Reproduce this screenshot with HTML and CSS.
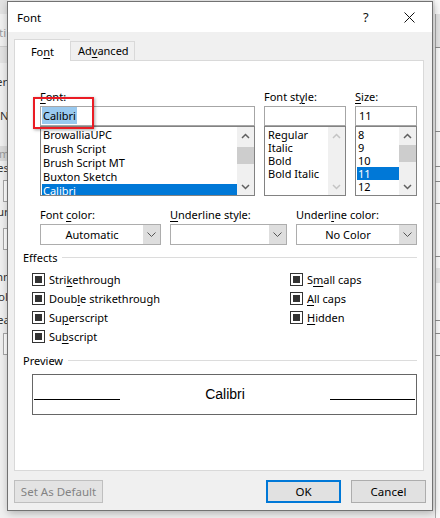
FILE: index.html
```html
<!DOCTYPE html>
<html lang="en">
<head>
    <meta charset="UTF-8">
    <meta name="viewport" content="width=device-width, initial-scale=1.0">
    <title>Font</title>
    <link rel="stylesheet" href="styles.css">
</head>
<body>
    <!-- the Word window behind the dialog -->
    <div class="backdrop">
        <div class="bd-band bd-band-top"></div>
        <div class="bd-band bd-band-tabs"></div>
        <span class="bd-text bd-faint" style="top: 26px; left: -1px;">ti</span>
        <span class="bd-text" style="top: 75px; left: -4px;">er</span>
        <span class="bd-text" style="top: 109px; left: 0px;">N</span>
        <div class="bd-box bd-box-gray" style="top: 146px;"><span class="bd-faint">m</span></div>
        <span class="bd-text" style="top: 161px; left: -3px;">es</span>
        <div class="bd-box" style="top: 180px;"></div>
        <span class="bd-text" style="top: 205px; left: -3px;">ur</span>
        <div class="bd-box" style="top: 228px;"></div>
        <span class="bd-text" style="top: 270px; left: -4px;">nn</span>
        <span class="bd-text" style="top: 290px; left: -2px;">ol</span>
        <span class="bd-text" style="top: 313px; left: -3px;">ea</span>
        <div class="bd-box" style="top: 333px;"></div>

        <div class="bd-right">
            <div class="bd-rband" style="top: 14px; height: 33px;"></div>
            <div class="bd-rline" style="top: 47px;"></div>
            <div class="bd-rline" style="top: 131px;"></div>
            <div class="bd-rline" style="top: 166px;"></div>
            <div class="bd-rline" style="top: 181px;"></div>
            <div class="bd-rline" style="top: 203px;"></div>
            <div class="bd-rline" style="top: 256px;"></div>
            <div class="bd-rband" style="top: 268px; height: 15px;"></div>
            <div class="bd-rline" style="top: 320px;"></div>
            <div class="bd-rline" style="top: 333px;"></div>
            <div class="bd-rline" style="top: 355px;"></div>
        </div>
    </div>

    <div class="dialog">
        <div class="titlebar">
            <span class="title">Font</span>
            <span class="help">?</span>
            <span class="close">
                <svg width="11" height="11" viewBox="0 0 11 11"><path d="M0.5 0.5 L10.5 10.5 M10.5 0.5 L0.5 10.5" stroke="#111" stroke-width="1" fill="none"/></svg>
            </span>
        </div>

        <div class="client">
            <div class="tabs">
                <div class="tab tab-active">Fo<u>n</u>t</div>
                <div class="tab">Ad<u>v</u>anced</div>
            </div>

            <div class="panel">
                <div class="pickers">
                    <div class="picker picker-font">
                        <div class="label"><u>F</u>ont:</div>
                        <div class="field"><span class="sel-text">Calibri</span></div>
                        <div class="listbox">
                            <ul class="items items-font">
                                <li>BrowalliaUPC</li>
                                <li>Brush Script</li>
                                <li>Brush Script MT</li>
                                <li>Buxton Sketch</li>
                                <li class="selected">Calibri</li>
                            </ul>
                            <div class="scrollbar">
                                <div class="sb-btn"><svg width="9" height="6" viewBox="0 0 9 6"><path d="M1 5 L4.5 1.5 L8 5" stroke="#606060" stroke-width="1.5" fill="none"/></svg></div>
                                <div class="sb-track"><div class="sb-thumb thumb-font"></div></div>
                                <div class="sb-btn"><svg width="9" height="6" viewBox="0 0 9 6"><path d="M1 1 L4.5 4.5 L8 1" stroke="#606060" stroke-width="1.5" fill="none"/></svg></div>
                            </div>
                        </div>
                    </div>

                    <div class="picker picker-style">
                        <div class="label">Font st<u>y</u>le:</div>
                        <div class="field"></div>
                        <div class="listbox">
                            <ul class="items items-style">
                                <li>Regular</li>
                                <li>Italic</li>
                                <li>Bold</li>
                                <li>Bold Italic</li>
                            </ul>
                            <div class="scrollbar">
                                <div class="sb-btn"><svg width="9" height="6" viewBox="0 0 9 6"><path d="M1 5 L4.5 1.5 L8 5" stroke="#c4c4c4" stroke-width="1.5" fill="none"/></svg></div>
                                <div class="sb-track"></div>
                                <div class="sb-btn"><svg width="9" height="6" viewBox="0 0 9 6"><path d="M1 1 L4.5 4.5 L8 1" stroke="#c4c4c4" stroke-width="1.5" fill="none"/></svg></div>
                            </div>
                        </div>
                    </div>

                    <div class="picker picker-size">
                        <div class="label"><u>S</u>ize:</div>
                        <div class="field">11</div>
                        <div class="listbox">
                            <ul class="items items-size">
                                <li>8</li>
                                <li>9</li>
                                <li>10</li>
                                <li class="selected">11</li>
                                <li>12</li>
                            </ul>
                            <div class="scrollbar">
                                <div class="sb-btn"><svg width="9" height="6" viewBox="0 0 9 6"><path d="M1 5 L4.5 1.5 L8 5" stroke="#606060" stroke-width="1.5" fill="none"/></svg></div>
                                <div class="sb-track"><div class="sb-thumb thumb-size"></div></div>
                                <div class="sb-btn"><svg width="9" height="6" viewBox="0 0 9 6"><path d="M1 1 L4.5 4.5 L8 1" stroke="#606060" stroke-width="1.5" fill="none"/></svg></div>
                            </div>
                        </div>
                    </div>
                </div>

                <div class="combos">
                    <div class="combo combo-wide">
                        <div class="label">Font <u>c</u>olor:</div>
                        <div class="dropdown">
                            <span class="dd-value">Automatic</span>
                            <span class="dd-btn"><svg width="9" height="5" viewBox="0 0 9 5"><path d="M0.5 0.5 L4.5 4.5 L8.5 0.5" stroke="#555" stroke-width="1" fill="none"/></svg></span>
                        </div>
                    </div>
                    <div class="combo combo-mid">
                        <div class="label"><u>U</u>nderline style:</div>
                        <div class="dropdown">
                            <span class="dd-value"></span>
                            <span class="dd-btn"><svg width="9" height="5" viewBox="0 0 9 5"><path d="M0.5 0.5 L4.5 4.5 L8.5 0.5" stroke="#555" stroke-width="1" fill="none"/></svg></span>
                        </div>
                    </div>
                    <div class="combo combo-wide">
                        <div class="label">Underl<u>i</u>ne color:</div>
                        <div class="dropdown">
                            <span class="dd-value">No Color</span>
                            <span class="dd-btn"><svg width="9" height="5" viewBox="0 0 9 5"><path d="M0.5 0.5 L4.5 4.5 L8.5 0.5" stroke="#555" stroke-width="1" fill="none"/></svg></span>
                        </div>
                    </div>
                </div>

                <div class="group-head group-effects">Effects</div>
                <div class="effects">
                    <div class="check"><span class="box"></span><span>Stri<u>k</u>ethrough</span></div>
                    <div class="check"><span class="box"></span><span>S<u>m</u>all caps</span></div>
                    <div class="check"><span class="box"></span><span>Doub<u>l</u>e strikethrough</span></div>
                    <div class="check"><span class="box"></span><span><u>A</u>ll caps</span></div>
                    <div class="check"><span class="box"></span><span>Su<u>p</u>erscript</span></div>
                    <div class="check"><span class="box"></span><span><u>H</u>idden</span></div>
                    <div class="check"><span class="box"></span><span>Su<u>b</u>script</span></div>
                </div>

                <div class="group-head group-preview">Preview</div>
                <div class="preview">
                    <div class="pv-line pv-left"></div>
                    <div class="pv-text">Calibri</div>
                    <div class="pv-line pv-right"></div>
                </div>

                <div class="callout"></div>
            </div>

            <div class="buttons">
                <button class="btn btn-disabled">Set As Default</button>
                <div class="btn-group">
                    <button class="btn btn-default">OK</button>
                    <button class="btn">Cancel</button>
                </div>
            </div>
        </div>
    </div>
</body>
</html>
```

FILE: styles.css
```css
* { box-sizing: border-box; }

body {
    margin: 0;
    width: 440px;
    height: 518px;
    overflow: hidden;
    position: relative;
    background: #f4f4f4;
    font-family: "Noto Sans", "Open Sans", sans-serif;
    font-size: 11px;
    color: #000;
}

u { text-decoration-thickness: 1px; text-underline-offset: 2px; }

/* ---------- window behind ---------- */
.backdrop {
    position: absolute;
    inset: 0;
    background: #f0f0f0;
}
.bd-band { position: absolute; left: 0; width: 8px; }
.bd-band-top { top: 0; height: 14px; background: #e2e2e2; }
.bd-band-tabs { top: 46px; height: 17px; background: #e3e3e3; border-top: 1px solid #cfcfcf; }
.bd-text {
    position: absolute;
    line-height: 14px;
    font-size: 11.5px;
    color: #333;
}
.bd-faint { color: #9b9b9b; }
.bd-box {
    position: absolute;
    left: 3px;
    width: 10px;
    height: 22px;
    border: 1px solid #a8a8a8;
    background: #fff;
}
.bd-box-gray {
    left: -2px;
    height: 15px;
    border: none;
    background: #dadada;
    line-height: 15px;
    padding-left: 1px;
}
.bd-right {
    position: absolute;
    left: 432px;
    top: 0;
    width: 8px;
    height: 518px;
    background: #fafafa;
    border-left: 3px solid #f0f0f0;
}
.bd-right::before {
    content: "";
    position: absolute;
    left: 0;
    top: 14px;
    bottom: 0;
    width: 1px;
    background: #a9a9a9;
}
.bd-rline { position: absolute; left: 0; right: 0; height: 1px; background: #8c8c8c; }
.bd-rband { position: absolute; left: 1px; right: 0; background: #e4e4e4; }

/* ---------- dialog ---------- */
.dialog {
    position: absolute;
    left: 7px;
    top: 1px;
    width: 426px;
    height: 510px;
    border: 1px solid #727272;
    background: #f0f0f0;
    box-shadow: 1px 2px 8px rgba(0,0,0,0.28);
    display: flex;
    flex-direction: column;
}

.titlebar {
    height: 30px;
    background: #fff;
    display: flex;
    align-items: center;
    padding-left: 9px;
    font-size: 11.5px;
}
.title { flex: 1; }
.help { width: 14px; margin-right: 27px; font-size: 13px; color: #111; }
.close { width: 11px; margin-right: 17px; display: flex; }

.client {
    flex: 1;
    padding: 7px 6px 7px 6px;
    display: flex;
    flex-direction: column;
}

/* ---------- tabs ---------- */
.tabs {
    display: flex;
    align-items: flex-end;
    height: 22px;
    margin-bottom: -1px;
    position: relative;
    z-index: 1;
}
.tab {
    height: 19px;
    margin-bottom: 1px;
    padding: 0 7px;
    border: 1px solid #d9d9d9;
    border-bottom: none;
    line-height: 17px;
    background: #f0f0f0;
    text-align: center;
}
.tab-active {
    height: 22px;
    width: 56px;
    margin-bottom: 0;
    background: #fff;
    line-height: 24px;
    border-right: none;
}
.tab + .tab { width: 65px; }

.panel {
    position: relative;
    width: 410px;
    height: 411px;
    background: #fff;
    border: 1px solid #d9d9d9;
    padding: 28px 6px 0 8px;
}

.label { height: 16px; line-height: 16px; white-space: nowrap; }

/* ---------- font / style / size pickers ---------- */
.pickers {
    display: flex;
    gap: 9px;
    margin-left: 17px;
}
.picker-font { width: 215px; }
.picker-style { width: 82px; }
.picker-size { width: 62px; }

.field {
    margin-top: 1px;
    height: 20px;
    border: 1px solid #a6a6a6;
    padding-left: 3px;
    line-height: 18px;
}
.picker-font .field { padding-left: 1px; }
.sel-text { background: #99c9ef; padding: 1px 1px; }

.listbox {
    height: 70px;
    border: 1px solid #828282;
    display: flex;
    overflow: hidden;
}
.items {
    flex: 1;
    list-style: none;
    margin: 0;
    padding: 1px 0 0 0;
}
.items li {
    margin-left: 1px;
    padding-left: 1px;
    height: 13px;
    line-height: 13px;
    white-space: nowrap;
}
.items-font li { height: 14px; line-height: 14px; }
.items-style li { padding-left: 2px; }
.items li.selected { background: #0078d7; color: #fff; }

.scrollbar {
    width: 17px;
    background: #f0f0f0;
    display: flex;
    flex-direction: column;
}
.sb-btn {
    height: 17px;
    display: flex;
    align-items: center;
    justify-content: center;
}
.sb-track { flex: 1; }
.sb-thumb { height: 17px; background: #cdcdcd; }
.thumb-font { margin-top: 3px; }
.thumb-size { margin-top: 1px; }

/* ---------- combos ---------- */
.combos {
    display: flex;
    gap: 9px;
    margin: 11px 0 0 17px;
}
.combo-wide { width: 121px; }
.combo-mid { width: 117px; }
.dropdown {
    margin-top: 1px;
    height: 21px;
    border: 1px solid #adadad;
    background: #fff;
    display: flex;
}
.dd-value { flex: 1; text-align: center; line-height: 19px; }
.dd-btn {
    width: 17px;
    background: #dedede;
    display: flex;
    align-items: center;
    justify-content: center;
}

/* ---------- groups ---------- */
.group-head {
    display: flex;
    align-items: center;
    height: 16px;
    line-height: 16px;
    gap: 5px;
}
.group-head::after {
    content: "";
    flex: 1;
    height: 1px;
    background: #dcdcdc;
    margin-top: -1px;
}
.group-effects { margin-top: 5px; }
.group-preview { margin-top: 7px; }

.effects {
    display: grid;
    grid-template-columns: 258px 1fr;
    margin: 4px 0 0 9px;
}
.check {
    height: 19px;
    display: flex;
    align-items: center;
    gap: 4px;
    white-space: nowrap;
}
.box {
    width: 13px;
    height: 13px;
    border: 1px solid #333;
    padding: 2px;
    background: #fff;
    background-clip: padding-box;
    display: flex;
}
.box::before {
    content: "";
    flex: 1;
    background: #333;
}

/* ---------- preview ---------- */
.preview {
    margin: 5px 0 0 9px;
    width: 385px;
    height: 41px;
    border: 1px solid #666;
    display: flex;
    align-items: center;
}
.pv-line {
    align-self: flex-end;
    height: 1px;
    background: #000;
    margin-bottom: 14px;
}
.pv-left { width: 86px; margin-left: 1px; }
.pv-right { width: 85px; margin-right: 1px; }
.pv-text {
    flex: 1;
    text-align: center;
    font-family: "Liberation Sans", Arial, sans-serif;
    font-size: 14px;
    padding-bottom: 1px;
}

/* red highlight drawn over the Font field */
.callout {
    position: absolute;
    left: 18px;
    top: 36px;
    width: 61px;
    height: 32px;
    border: 2px solid #ea1c24;
    box-shadow: 1px 1px 3px rgba(0,0,0,0.35);
}

/* ---------- buttons ---------- */
.buttons {
    margin-top: 9px;
    display: flex;
    justify-content: space-between;
}
.btn-group { display: flex; gap: 10px; }
.btn {
    height: 23px;
    width: 75px;
    border: 1px solid #adadad;
    background: #e1e1e1;
    font-family: inherit;
    font-size: 11.5px;
    color: #000;
    padding: 0;
}
.btn-disabled {
    width: 89px;
    border-color: #bfbfbf;
    background: #e3e3e3;
    color: #838383;
}
.btn-default { border: 2px solid #0078d7; }
```
